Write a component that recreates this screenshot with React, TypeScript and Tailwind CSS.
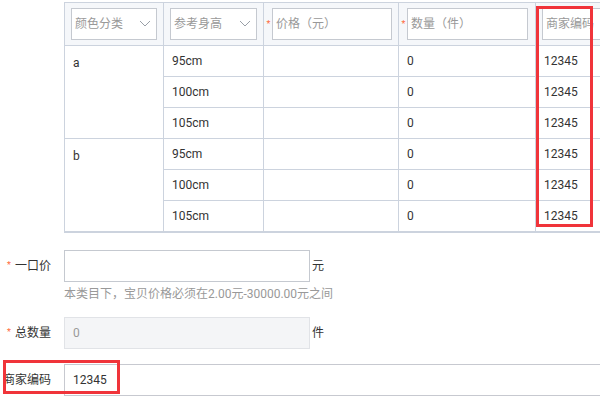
import React from "react";

const font = { fontFamily: '"Roboto", "Noto Sans CJK SC", sans-serif' };

const rows = [
  { color: "a", sizes: ["95cm", "100cm", "105cm"] },
  { color: "b", sizes: ["95cm", "100cm", "105cm"] },
];

function Chevron() {
  return (
    <svg width="12" height="8" viewBox="0 0 12 8" className="shrink-0">
      <polyline points="1,1 6,6 11,1" fill="none" stroke="#9aa0a8" strokeWidth="1" />
    </svg>
  );
}

function SelectBox({ label }: { label: string }) {
  return (
    <div className="flex h-[32px] items-center justify-between border border-[#c5c9d0] bg-white pl-[3px] pr-[5px]">
      <span className="text-[12px] text-[#999]">{label}</span>
      <Chevron />
    </div>
  );
}

function Star({ gap = "mr-[1px]" }: { gap?: string }) {
  return <span className={`${gap} inline-block w-[5px] text-[9px] leading-none text-[#ff6a3d]`}>*</span>;
}

function HeadInput({ label }: { label: string }) {
  return (
    <div className="flex h-[32px] flex-1 items-center border border-[#c5c9d0] bg-white pl-[3px]">
      <span className="whitespace-nowrap text-[12px] text-[#999]">{label}</span>
    </div>
  );
}

const td = "border border-[#ccd3de] h-[31px] px-[8px] text-[12px] text-[#333] align-middle";

export default function App() {
  return (
    <div className="relative h-[400px] w-[600px] overflow-hidden bg-white" style={font}>
      <div className="pl-[64px] pt-[2px]">
        <table className="w-[620px] table-fixed border-collapse border-b-2 border-b-[#ccd3de]">
          <colgroup>
            <col className="w-[99px]" />
            <col className="w-[100px]" />
            <col className="w-[135px]" />
            <col className="w-[137px]" />
            <col className="w-[149px]" />
          </colgroup>
          <thead>
            <tr className="bg-[#f5f7fa]">
              <th className="h-[43px] border border-[#ccd3de] px-[6px] font-normal">
                <SelectBox label="颜色分类" />
              </th>
              <th className="border border-[#ccd3de] px-[6px] font-normal">
                <SelectBox label="参考身高" />
              </th>
              <th className="border border-[#ccd3de] pl-[2px] pr-[6px] font-normal">
                <div className="flex items-center">
                  <Star />
                  <HeadInput label="价格（元）" />
                </div>
              </th>
              <th className="border border-[#ccd3de] pl-[2px] pr-[7px] font-normal">
                <div className="flex items-center">
                  <Star />
                  <HeadInput label="数量（件）" />
                </div>
              </th>
              <th className="border border-[#ccd3de] pl-[6px] pr-[0px] font-normal">
                <div className="flex">
                  <HeadInput label="商家编码" />
                </div>
              </th>
            </tr>
          </thead>
          <tbody>
            {rows.map((r) =>
              r.sizes.map((s, i) => (
                <tr key={r.color + s}>
                  {i === 0 && (
                    <td rowSpan={3} className="border border-[#ccd3de] px-[8px] pt-[8px] align-top text-[12px] text-[#333]">
                      {r.color}
                    </td>
                  )}
                  <td className={td}>{s}</td>
                  <td className={td}></td>
                  <td className={td}>0</td>
                  <td className={td}>12345</td>
                </tr>
              ))
            )}
          </tbody>
        </table>
      </div>

      <div className="mt-[17px] flex items-start">
        <div className="flex h-[32px] w-[64px] items-center justify-end pr-[13px] text-[12px] text-[#333]">
          <Star gap="mr-[3px]" />
          一口价
        </div>
        <div className="flex flex-col">
          <div className="flex items-center">
            <div className="h-[32px] w-[246px] border border-[#c5c9d0] bg-white" />
            <span className="ml-[2px] text-[12px] text-[#333]">元</span>
          </div>
          <div className="mt-[3px] text-[12px] text-[#999]">本类目下，宝贝价格必须在2.00元-30000.00元之间</div>
        </div>
      </div>

      <div className="mt-[14px] flex items-center">
        <div className="flex h-[32px] w-[64px] items-center justify-end pr-[13px] text-[12px] text-[#333]">
          <Star gap="mr-[3px]" />
          总数量
        </div>
        <div className="flex h-[32px] w-[246px] items-center border border-[#e1e3e7] bg-[#f4f5f7] pl-[8px] text-[12px] text-[#999]">
          0
        </div>
        <span className="ml-[2px] text-[12px] text-[#333]">件</span>
      </div>

      <div className="mt-[15px] flex items-center">
        <div className="flex h-[32px] w-[64px] items-center justify-end pr-[13px] text-[12px] text-[#333] whitespace-nowrap">
          商家编码
        </div>
        <div className="flex h-[32px] flex-1 items-center border border-r-0 border-[#c7c9d0] pl-[8px] text-[12px] text-[#333]">
          12345
        </div>
      </div>

      <div className="pointer-events-none absolute left-[536px] top-[6px] h-[221px] w-[57px] border-[3px] border-[#f0343a]" />
      <div className="pointer-events-none absolute left-[3px] top-[360px] h-[34px] w-[117px] border-[3px] border-[#f0343a]" />
    </div>
  );
}
